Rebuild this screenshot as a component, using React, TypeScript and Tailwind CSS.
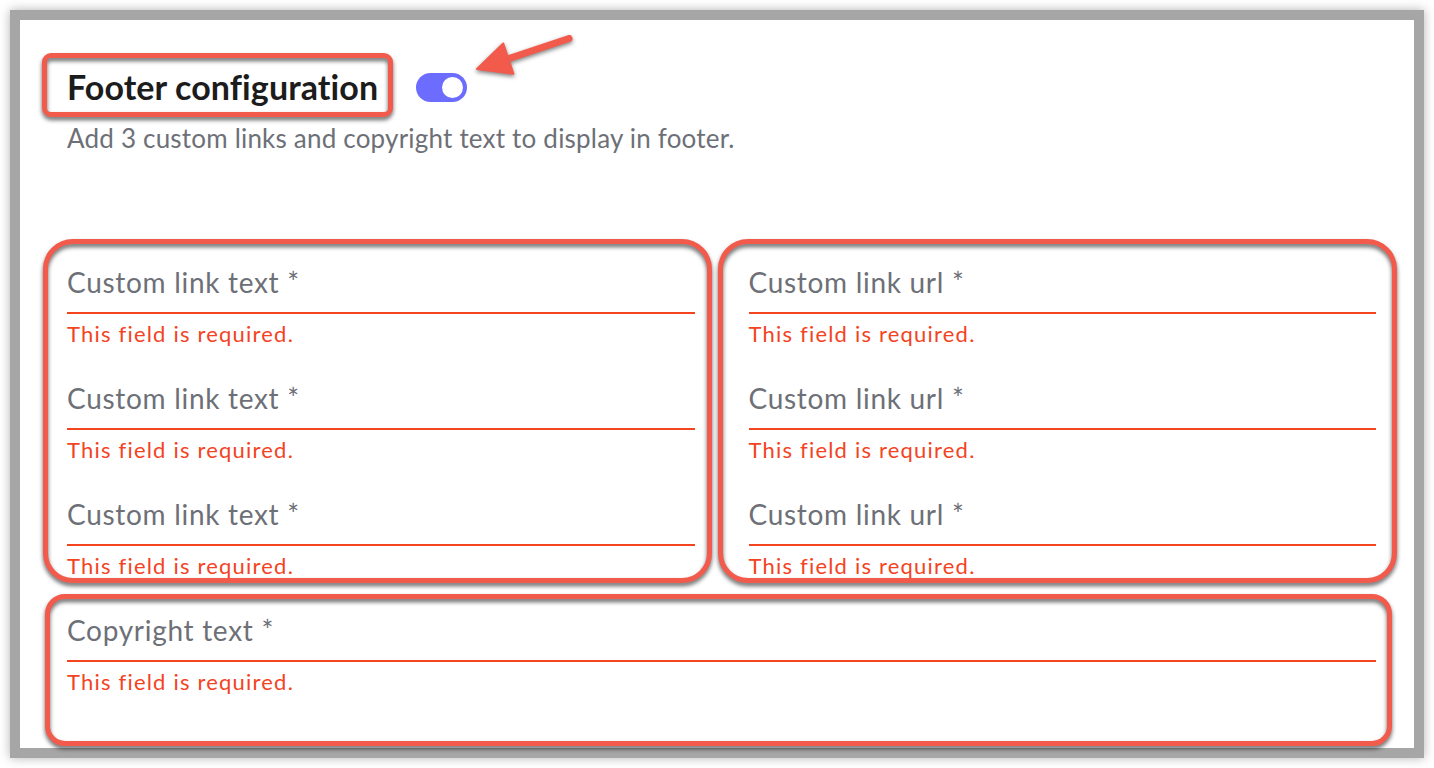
import React from 'react';

// Footer configuration panel with annotation overlays (red call-out boxes + arrow).

const ROWS = [
  ['Custom link text *', 'Custom link url *'],
  ['Custom link text *', 'Custom link url *'],
  ['Custom link text *', 'Custom link url *'],
];

function Field({ label, wide }: { label: string; wide?: boolean }) {
  return (
    <div className={wide ? 'col-span-2' : ''}>
      <div className="text-[28px] leading-[34px] tracking-[0.7px] text-[#6d7077]">{label}</div>
      <div className="mt-[13px] h-[2px] bg-[#f4431f]" />
      <div className="mt-[7px] text-[22px] leading-[26px] tracking-[1.2px] text-[#f4431f]">This field is required.</div>
    </div>
  );
}

export default function App() {
  return (
    <div className="relative h-[768px] w-[1434px] overflow-hidden bg-white p-[10px] font-[Lato,sans-serif]">
      <div className="relative h-[748px] w-[1414px] border-[10px] border-[#a6a6a6] bg-white shadow-[0_0_10px_rgba(0,0,0,0.3)]">
        <div className="pl-[47px] pr-[38px] pt-[47px]">
          <div className="flex h-[40px] items-center">
            <h1 className="text-[34px] font-bold leading-[40px] tracking-[0.1px] text-[#1c1c1c]">Footer configuration</h1>
            <button
              type="button"
              aria-label="Enable footer"
              className="ml-[38px] flex h-[29px] w-[51px] items-center justify-end rounded-full bg-[#6c6cff] pr-[4px]"
            >
              <span className="h-[21px] w-[21px] rounded-full bg-white" />
            </button>
          </div>
          <p className="mt-[15px] text-[26px] leading-[32px] tracking-[0.2px] text-[#6d7077]">
            Add 3 custom links and copyright text to display in footer.
          </p>

          <div className="mt-[111px] grid grid-cols-2 gap-x-[54px] gap-y-[34px]">
            {ROWS.map(([a, b], i) => (
              <React.Fragment key={i}>
                <Field label={a} />
                <Field label={b} />
              </React.Fragment>
            ))}
            <Field label="Copyright text *" wide />
          </div>
        </div>

        {/* annotation call-outs */}
        <div className="pointer-events-none absolute left-[22px] top-[33px] h-[64px] w-[351px] rounded-[9px] border-[5px] border-[#f25a4c] drop-shadow-[0_3px_2px_rgba(0,0,0,0.6)]" />
        <div className="pointer-events-none absolute left-[23px] top-[219px] h-[344px] w-[669px] rounded-[30px] border-[5px] border-[#f25a4c] drop-shadow-[0_3px_2px_rgba(0,0,0,0.6)]" />
        <div className="pointer-events-none absolute left-[698px] top-[219px] h-[344px] w-[679px] rounded-[30px] border-[5px] border-[#f25a4c] drop-shadow-[0_3px_2px_rgba(0,0,0,0.6)]" />
        <div className="pointer-events-none absolute left-[25px] top-[574px] h-[152px] w-[1347px] rounded-[20px] border-[5px] border-[#f25a4c] drop-shadow-[0_3px_2px_rgba(0,0,0,0.6)]" />
      </div>

      <svg
        className="pointer-events-none absolute left-[460px] top-[28px] drop-shadow-[0_2px_2px_rgba(0,0,0,0.5)]"
        width="120"
        height="56"
        viewBox="460 28 120 56"
        fill="none"
      >
        <path d="M569 38.5 L506 59.5" stroke="#f25a4c" strokeWidth="7" strokeLinecap="round" />
        <path d="M477 69 L503.2 43.4 L513.4 73.8 Z" fill="#f25a4c" stroke="#f25a4c" strokeWidth="2" strokeLinejoin="round" />
      </svg>
    </div>
  );
}
